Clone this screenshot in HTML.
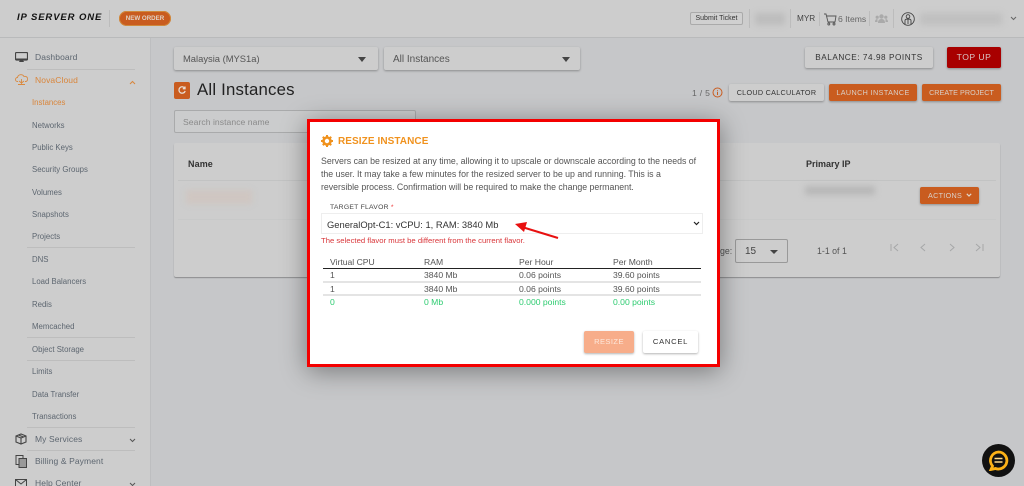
<!DOCTYPE html>
<html><head><meta charset="utf-8"><title>Resize Instance</title>
<style>
html,body{margin:0;padding:0;width:1024px;height:486px;overflow:hidden;background:#c6c7c9}
#p{position:relative;width:1024px;height:486px;overflow:hidden;font-family:"Liberation Sans",sans-serif;color:#4a4a4a;filter:blur(.25px)}
.a{position:absolute}
.t{position:absolute;white-space:nowrap;line-height:12px;height:12px}
.nav{left:32px;font-size:7.8px;color:#5d6670;margin-top:1px}
.top{left:35px;font-size:8.5px;color:#5d6670;letter-spacing:.1px}
.ln{position:absolute;left:27px;width:108px;height:1px;background:#bdbdbd}
.btn{position:absolute;border-radius:2px;text-align:center;white-space:nowrap;box-shadow:0 1px 2px rgba(0,0,0,.3)}
.or{background:#c95c1f;color:#d9d0c8}
.m{position:absolute;white-space:nowrap;line-height:12px;height:12px;font-size:8.8px;color:#555}
.g{color:#2ecc71}
.r{position:absolute;height:2px;left:323px;width:378px;background:#e4e4e4}
.blur{position:absolute;filter:blur(3px)}
</style></head><body><div id="p">

<!-- header -->
<div class="a" style="left:0;top:0;width:1024px;height:37px;background:#cdcdcd;border-bottom:1px solid #b9babb"></div>
<div class="t" style="left:17px;top:12px;font-size:9.5px;font-weight:bold;font-style:italic;color:#111;letter-spacing:.9px">IP SERVER ONE</div>
<div class="a" style="left:109px;top:10px;width:1px;height:17px;background:#bcbcbc"></div>
<div class="a" style="left:119px;top:11px;width:52px;height:15px;border-radius:8px;background:#c95c1f;box-shadow:0 0 0 1px #d08a3c inset"></div>
<div class="t" style="left:119px;top:13px;width:52px;text-align:center;font-size:6.2px;font-weight:bold;color:#e0d2c6">NEW ORDER</div>

<div class="a" style="left:690px;top:12px;width:53px;height:13px;border:1px solid #aaa;border-radius:2px;box-sizing:border-box;background:#d0d0d0"></div>
<div class="t" style="left:690px;top:13px;width:53px;text-align:center;font-size:7px;color:#333">Submit Ticket</div>
<div class="a" style="left:749px;top:9px;width:1px;height:19px;background:#bcbcbc"></div>
<div class="blur" style="left:755px;top:13px;width:30px;height:12px;background:#bdbdbd"></div>
<div class="a" style="left:790px;top:9px;width:1px;height:19px;background:#bcbcbc"></div>
<div class="t" style="left:797px;top:13px;font-size:8.2px;color:#444">MYR</div>
<div class="a" style="left:819px;top:12px;width:1px;height:14px;background:#bcbcbc"></div>
<svg class="a" style="left:823px;top:12px" width="14" height="14" viewBox="0 0 14 14" fill="none" stroke="#555" stroke-width=".9"><path d="M1 2h2l2 8h7l1-6H3.6"/><circle cx="5.8" cy="12" r="1"/><circle cx="11" cy="12" r="1"/></svg>
<div class="t" style="left:838px;top:13px;font-size:8.6px;color:#666">6 Items</div>
<div class="a" style="left:869px;top:11px;width:1px;height:15px;background:#bcbcbc"></div>
<svg class="a" style="left:875px;top:14px" width="13" height="9" viewBox="0 0 13 9" fill="#aaa"><circle cx="6.5" cy="2.5" r="2.2"/><circle cx="2.2" cy="3.2" r="1.6"/><circle cx="10.8" cy="3.2" r="1.6"/><path d="M3 9c0-3 1.5-4 3.500-4S10 6 10 9zM0 8c0-2 1-3 2.500-3L2.500 8zM13 8c0-2-1-3-2.500-3l0 3z"/></svg>
<div class="a" style="left:893px;top:9px;width:1px;height:19px;background:#bcbcbc"></div>
<svg class="a" style="left:901px;top:12px" width="14" height="14" viewBox="0 0 14 14" fill="none" stroke="#444" stroke-width=".9"><circle cx="7" cy="7" r="6.300"/><circle cx="7" cy="4.500" r="1.800"/><path d="M4 12V8.500c0-1 1-1.500 3-1.500s3 .5 3 1.500V12M7 7v5"/></svg>
<div class="blur" style="left:920px;top:13px;width:82px;height:12px;background:#c0c0c0"></div>
<svg class="a" style="left:1010px;top:16px" width="7" height="5" viewBox="0 0 7 5" fill="none" stroke="#666" stroke-width="1"><path d="M1 1l2.500 2.500L6 1"/></svg>

<!-- sidebar -->
<div class="a" style="left:0;top:38px;width:150px;height:448px;background:#cdcdcd;border-right:1px solid #bdbec0"></div>
<svg class="a" style="left:15px;top:52px" width="13" height="11" viewBox="0 0 13 11"><rect x=".5" y=".5" width="12" height="7.500" rx="1" fill="none" stroke="#444" stroke-width="1.200"/><rect x="1" y="6.500" width="11" height="1.500" fill="#444"/><path d="M4 10h5L8 8H5z" fill="#444"/></svg>
<div class="t top" style="top:51px">Dashboard</div>
<div class="ln" style="top:69px"></div>
<svg class="a" style="left:15px;top:74px" width="13" height="12" viewBox="0 0 13 12" fill="none" stroke="#d9893f" stroke-width=".9"><path d="M3 7.500H2.500a2 2 0 0 1 0-4 3.500 3.500 0 0 1 6.500-1 2.500 2.500 0 0 1 2 5h-1M6.500 5v6M4 7l2.500 2L9 7M3 10.500h7"/></svg>
<div class="t top" style="top:74px;color:#d9853a">NovaCloud</div>
<svg class="a" style="left:129px;top:80px" width="7" height="5" viewBox="0 0 7 5" fill="none" stroke="#d9853a" stroke-width="1"><path d="M1 4l2.500-2.500L6 4"/></svg>
<div class="t nav" style="top:96px;color:#d9853a">Instances</div>
<div class="t nav" style="top:119px">Networks</div>
<div class="t nav" style="top:141px">Public Keys</div>
<div class="t nav" style="top:163px">Security Groups</div>
<div class="t nav" style="top:186px">Volumes</div>
<div class="t nav" style="top:208px">Snapshots</div>
<div class="t nav" style="top:230px">Projects</div>
<div class="ln" style="top:247px"></div>
<div class="t nav" style="top:253px">DNS</div>
<div class="t nav" style="top:275px">Load Balancers</div>
<div class="t nav" style="top:298px">Redis</div>
<div class="t nav" style="top:320px">Memcached</div>
<div class="ln" style="top:360px"></div>
<div class="ln" style="top:337px"></div>
<div class="t nav" style="top:343px">Object Storage</div>
<div class="t nav" style="top:365px">Limits</div>
<div class="t nav" style="top:388px">Data Transfer</div>
<div class="t nav" style="top:410px">Transactions</div>
<div class="ln" style="top:427px"></div>
<svg class="a" style="left:15px;top:433px" width="12" height="12" viewBox="0 0 12 12" fill="none" stroke="#444" stroke-width="1.100"><path d="M1 3l5-2 5 2v6l-5 2-5-2zM1 3l5 2 5-2M6 5v6M3.500 2l5 2"/></svg>
<div class="t top" style="top:433px">My Services</div>
<svg class="a" style="left:129px;top:438px" width="7" height="5" viewBox="0 0 7 5" fill="none" stroke="#555" stroke-width="1"><path d="M1 1l2.500 2.500L6 1"/></svg>
<div class="ln" style="top:450px"></div>
<svg class="a" style="left:15px;top:455px" width="12" height="13" viewBox="0 0 12 13" fill="none" stroke="#444" stroke-width="1"><rect x="1" y=".5" width="7" height="9"/><rect x="4" y="3.500" width="7.500" height="9" fill="#999"/></svg>
<div class="t top" style="top:455px">Billing &amp; Payment</div>
<svg class="a" style="left:15px;top:479px" width="12" height="10" viewBox="0 0 12 10" fill="none" stroke="#444" stroke-width="1"><rect x=".5" y=".5" width="11" height="9"/><path d="M.5 .5L6 5l5.500-4.500"/></svg>
<div class="t top" style="top:477px">Help Center</div>
<svg class="a" style="left:129px;top:482px" width="7" height="5" viewBox="0 0 7 5" fill="none" stroke="#555" stroke-width="1"><path d="M1 1l2.500 2.500L6 1"/></svg>

<!-- main top -->
<div class="a" style="left:174px;top:47px;width:204px;height:23px;background:#cdcdcd;border-radius:2px;box-shadow:0 1px 2px rgba(0,0,0,.3)"></div>
<div class="t" style="left:183px;top:53px;font-size:9.400px;color:#555">Malaysia (MYS1a)</div>
<div class="a" style="left:358px;top:57px;width:0;height:0;border:4px solid transparent;border-top:5px solid #444;border-bottom:0"></div>
<div class="a" style="left:384px;top:47px;width:196px;height:23px;background:#cdcdcd;border-radius:2px;box-shadow:0 1px 2px rgba(0,0,0,.3)"></div>
<div class="t" style="left:393px;top:53px;font-size:10px;color:#555;margin-top:1px">All Instances</div>
<div class="a" style="left:562px;top:57px;width:0;height:0;border:4px solid transparent;border-top:5px solid #444;border-bottom:0"></div>

<div class="btn" style="left:805px;top:47px;width:128px;height:21px;background:#cdcdcd;line-height:21px;font-size:8.200px;letter-spacing:.55px;color:#333">BALANCE: 74.98 POINTS</div>
<div class="btn" style="left:947px;top:47px;width:54px;height:21px;background:#a80000;line-height:21px;font-size:8.600px;letter-spacing:.5px;color:#d8c4c4">TOP UP</div>

<div class="a" style="left:174px;top:82px;width:16px;height:17px;background:#c95c1f;border-radius:2px"></div>
<svg class="a" style="left:177px;top:85px" width="10" height="10" viewBox="0 0 10 10" fill="none" stroke="#e8dcd2" stroke-width="1.300"><path d="M8 3.500A3.200 3.200 0 1 0 8.200 6M8 1.500v2.200H5.800"/></svg>
<div class="t" style="left:197px;top:80px;height:20px;line-height:20px;font-size:16.800px;color:#222;letter-spacing:.2px">All Instances</div>

<div class="t" style="left:692px;top:87px;font-size:8.600px;color:#666;letter-spacing:.3px">1 / 5</div>
<svg class="a" style="left:712px;top:87px" width="11" height="11" viewBox="0 0 11 11" fill="none" stroke="#c95c1f" stroke-width="1"><circle cx="5.500" cy="5.500" r="4.500"/><path d="M5.500 3v.8M5.500 4.800V8"/></svg>
<div class="btn" style="left:729px;top:84px;width:95px;height:17px;background:#cdcdcd;line-height:17px;font-size:7.200px;letter-spacing:.3px;color:#333">CLOUD CALCULATOR</div>
<div class="btn or" style="left:829px;top:84px;width:88px;height:17px;line-height:17px;font-size:7.200px;letter-spacing:.4px">LAUNCH INSTANCE</div>
<div class="btn or" style="left:922px;top:84px;width:79px;height:17px;line-height:17px;font-size:7.200px;letter-spacing:.05px">CREATE PROJECT</div>

<div class="a" style="left:174px;top:110px;width:242px;height:23px;border:1px solid #a9aaab;box-sizing:border-box;border-radius:2px;background:#cbcccd"></div>
<div class="t" style="left:183px;top:116px;font-size:8.600px;color:#8a8a8a;letter-spacing:.05px">Search instance name</div>

<!-- table card -->
<div class="a" style="left:174px;top:143px;width:826px;height:134px;background:#cdcdcd;border-radius:2px;box-shadow:0 1px 1px rgba(0,0,0,.3)"></div>
<div class="a" style="left:178px;top:180px;width:818px;height:1px;background:#c2c3c3"></div>
<div class="a" style="left:178px;top:219px;width:818px;height:1px;background:#c8c9c9"></div>
<div class="t" style="left:188px;top:158px;font-size:9px;font-weight:bold;color:#333;letter-spacing:.1px">Name</div>
<div class="t" style="left:806px;top:158px;font-size:9px;font-weight:bold;color:#333">Primary IP</div>
<div class="blur" style="left:186px;top:190px;width:66px;height:14px;background:#cfc6c1"></div>
<div class="blur" style="left:805px;top:186px;width:70px;height:9px;background:#b8b8b8"></div>
<div class="btn or" style="left:920px;top:187px;width:59px;height:17px;line-height:17px;font-size:7.200px;letter-spacing:.3px;text-align:left;text-indent:8px">ACTIONS</div>
<svg class="a" style="left:966px;top:193px" width="6" height="4" viewBox="0 0 6 4" fill="none" stroke="#e0d6cc" stroke-width="1.200"><path d="M.8 .8L3 3l2.200-2.200"/></svg>
<div class="t" style="left:720px;top:245px;font-size:8.800px;color:#555">ge:</div>
<div class="a" style="left:735px;top:239px;width:53px;height:24px;border:1px solid #999;box-sizing:border-box;border-radius:2px"></div>
<div class="t" style="left:745px;top:246px;font-size:10px;color:#444">15</div>
<div class="a" style="left:770px;top:250px;width:0;height:0;border:4px solid transparent;border-top:4px solid #444;border-bottom:0"></div>
<div class="t" style="left:817px;top:245px;font-size:8.800px;color:#555">1-1 of 1</div>
<svg class="a" style="left:889px;top:242px" width="96" height="12" viewBox="0 0 96 12" fill="none" stroke="#a6a7a8" stroke-width="1"><path d="M2 2v7M9 2L5 5.500 9 9M36 2l-4 3.500L36 9M61 2l4 3.500L61 9M87 2l4 3.500L87 9M94 2v7"/></svg>

<!-- modal shadow -->
<div class="a" style="left:307px;top:119px;width:413px;height:248px;box-shadow:0 4px 24px rgba(0,0,0,.4)"></div>
<div class="a" style="left:307px;top:119px;width:413px;height:248px;box-sizing:border-box;border:3px solid #f40000;background:#fff"></div>

<svg class="a" style="left:321px;top:135px" width="12" height="12" viewBox="0 0 12 12"><circle cx="6" cy="6" r="3.500" fill="none" stroke="#f0921e" stroke-width="2.600"/><path d="M6 0v2M6 10v2M0 6h2M10 6h2M1.800 1.800l1.400 1.400M8.800 8.800l1.400 1.400M10.200 1.800L8.800 3.200M3.200 8.800l-1.400 1.400" stroke="#f0921e" stroke-width="2"/></svg>
<div class="t" style="left:338px;top:136px;font-size:10px;font-weight:bold;color:#f0921e;letter-spacing:.08px">RESIZE INSTANCE</div>

<div class="m" style="left:321px;top:155px;letter-spacing:-.02px">Servers can be resized at any time, allowing it to upscale or downscale according to the needs of</div>
<div class="m" style="left:321px;top:168px;letter-spacing:-.02px">the user. It may take a few minutes for the resized server to be up and running. This is a</div>
<div class="m" style="left:321px;top:181px;letter-spacing:-.02px">reversible process. Confirmation will be required to make the change permanent.</div>

<div class="t" style="left:330px;top:202px;font-size:6.800px;color:#444;letter-spacing:.25px">TARGET FLAVOR <span style="color:#e33">*</span></div>
<div class="a" style="left:321px;top:213px;width:382px;height:21px;box-sizing:border-box;border:1px solid #eee"></div>
<div class="t" style="left:327px;top:219px;font-size:9.400px;color:#333">GeneralOpt-C1: vCPU: 1, RAM: 3840 Mb</div>
<svg class="a" style="left:693px;top:221px" width="7" height="5" viewBox="0 0 7 5" fill="none" stroke="#222" stroke-width="1.200"><path d="M1 1l2.500 2.500L6 1"/></svg>
<svg class="a" style="left:510px;top:218px" width="52" height="26" viewBox="0 0 52 26"><path d="M48 20L12 9" stroke="#e81010" stroke-width="2"/><path d="M5 6L17 4 14 14z" fill="#e81010"/></svg>
<div class="t" style="left:321px;top:235px;font-size:7.700px;color:#d9363a;letter-spacing:.01px">The selected flavor must be different from the current flavor.</div>

<div class="m" style="left:330px;top:256px;font-size:8.600px">Virtual CPU</div>
<div class="m" style="left:424px;top:256px;font-size:8.600px">RAM</div>
<div class="m" style="left:519px;top:256px;font-size:8.600px">Per Hour</div>
<div class="m" style="left:613px;top:256px;font-size:8.600px">Per Month</div>
<div class="r" style="top:268px;height:1px;background:#222"></div>
<div class="m" style="left:330px;top:269px;font-size:8.600px">1</div>
<div class="m" style="left:424px;top:269px;font-size:8.600px">3840 Mb</div>
<div class="m" style="left:519px;top:269px;font-size:8.600px">0.06 points</div>
<div class="m" style="left:613px;top:269px;font-size:8.600px">39.60 points</div>
<div class="r" style="top:281px"></div>
<div class="m" style="left:330px;top:283px;font-size:8.600px">1</div>
<div class="m" style="left:424px;top:283px;font-size:8.600px">3840 Mb</div>
<div class="m" style="left:519px;top:283px;font-size:8.600px">0.06 points</div>
<div class="m" style="left:613px;top:283px;font-size:8.600px">39.60 points</div>
<div class="r" style="top:294px"></div>
<div class="m g" style="left:330px;top:296px;font-size:8.600px">0</div>
<div class="m g" style="left:424px;top:296px;font-size:8.600px">0 Mb</div>
<div class="m g" style="left:519px;top:296px;font-size:8.600px">0.000 points</div>
<div class="m g" style="left:613px;top:296px;font-size:8.600px">0.00 points</div>

<div class="btn" style="left:584px;top:331px;width:50px;height:22px;line-height:22px;background:#f7ad8a;color:#fde8dc;font-size:7.600px;letter-spacing:.4px">RESIZE</div>
<div class="btn" style="left:643px;top:331px;width:55px;height:22px;line-height:22px;background:#fff;color:#333;font-size:7.600px;letter-spacing:.75px">CANCEL</div>

<!-- chat -->
<div class="a" style="left:982px;top:444px;width:33px;height:33px;border-radius:50%;background:#111"></div>
<svg class="a" style="left:988px;top:450px" width="21" height="21" viewBox="0 0 21 21" fill="none"><path d="M10.500 2a8.500 8.500 0 1 1-3 16.500L3 19.500l1.500-3.500A8.500 8.500 0 0 1 10.500 2z" fill="none" stroke="#fbb117" stroke-width="2.800"/><path d="M6.500 8.500h8M6.500 12h8" stroke="#fdd98a" stroke-width="1.400"/></svg>

</div></body></html>
